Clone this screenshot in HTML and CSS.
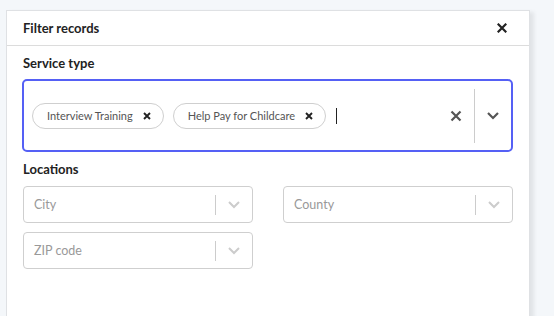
FILE: index.html
```html
<!DOCTYPE html>
<html>
<head>
<meta charset="utf-8">
<link rel="stylesheet" href="styles.css">
</head>
<body>
<div class="card">
  <div class="card-header">
    <span class="title">Filter records</span>
    <button class="close" aria-label="Close">
      <svg width="10" height="10" viewBox="0 0 10 10"><path d="M1.5 1.5 L8.5 8.5 M8.5 1.5 L1.5 8.5" stroke="#222" stroke-width="2.2" stroke-linecap="square"/></svg>
    </button>
  </div>
  <div class="card-body">
    <div class="label">Service type</div>
    <div class="multi">
      <div class="values">
        <span class="chip">Interview Training
          <svg class="chip-x" width="8" height="8" viewBox="0 0 8 8"><path d="M1 1 L7 7 M7 1 L1 7" stroke="#222" stroke-width="1.9"/></svg>
        </span>
        <span class="chip">Help Pay for Childcare
          <svg class="chip-x" width="8" height="8" viewBox="0 0 8 8"><path d="M1 1 L7 7 M7 1 L1 7" stroke="#222" stroke-width="1.9"/></svg>
        </span>
        <span class="caret"></span>
      </div>
      <div class="indicators">
        <span class="clear">
          <svg width="12" height="12" viewBox="0 0 12 12"><path d="M1.5 1.5 L10.5 10.5 M10.5 1.5 L1.5 10.5" stroke="#555" stroke-width="2.2"/></svg>
        </span>
        <span class="sep tall"></span>
        <span class="chev">
          <svg width="14" height="9" viewBox="0 0 14 9"><path d="M2 2 L7 7 L12 2" fill="none" stroke="#555" stroke-width="2.2"/></svg>
        </span>
      </div>
    </div>
    <div class="label loc">Locations</div>
    <div class="grid">
      <div class="select"><span class="ph">City</span><span class="sep"></span><span class="chev small"><svg width="14" height="9" viewBox="0 0 14 9"><path d="M2 2 L7 7 L12 2" fill="none" stroke="#ccc" stroke-width="2"/></svg></span></div>
      <div class="select"><span class="ph">County</span><span class="sep"></span><span class="chev small"><svg width="14" height="9" viewBox="0 0 14 9"><path d="M2 2 L7 7 L12 2" fill="none" stroke="#ccc" stroke-width="2"/></svg></span></div>
      <div class="select"><span class="ph">ZIP code</span><span class="sep"></span><span class="chev small"><svg width="14" height="9" viewBox="0 0 14 9"><path d="M2 2 L7 7 L12 2" fill="none" stroke="#ccc" stroke-width="2"/></svg></span></div>
    </div>
  </div>
</div>
</body>
</html>
```

FILE: styles.css
```css
html, body {
  margin: 0;
  padding: 0;
  background: #f4f7fa;
  font-family: Lato, "Noto Sans", sans-serif;
  height: 316px;
  overflow: hidden;
}
body {
  padding: 10px 0 0 6px;
  box-sizing: border-box;
}
.card {
  width: 524px;
  height: 320px;
  box-sizing: border-box;
  background: #fff;
  border: 1px solid #dfe1e4;
  box-shadow: 4px 2px 4px rgba(0,0,0,0.08);
}
.card-header {
  height: 35px;
  box-sizing: border-box;
  border-bottom: 1px solid #dcdcdc;
  display: flex;
  align-items: center;
  justify-content: space-between;
  padding: 0 22px 0 16px;
}
.title {
  font-size: 13px;
  font-weight: 700;
  color: #222;
}
.close {
  border: 0;
  background: none;
  padding: 0;
  display: flex;
}
.card-body {
  padding: 9px 16px 0 15px;
}
.label {
  font-size: 13px;
  font-weight: 700;
  color: #222;
  height: 16px;
  line-height: 16px;
  margin-left: 1px;
}
.multi {
  margin-top: 8px;
  height: 73px;
  box-sizing: border-box;
  border: 2px solid #5560f5;
  border-radius: 5px;
  display: flex;
  align-items: center;
}
.values {
  flex: 1;
  display: flex;
  align-items: center;
  padding-left: 8px;
  gap: 9px;
}
.chip {
  height: 26px;
  box-sizing: border-box;
  border: 1px solid #cfcfcf;
  border-radius: 13px;
  display: inline-flex;
  align-items: center;
  padding: 0 12px 0 14px;
  font-size: 11px;
  color: #555;
  gap: 10px;
}
.caret {
  width: 1px;
  height: 16px;
  background: #222;
  margin-left: 1px;
}
.indicators {
  display: flex;
  align-items: center;
  height: 100%;
}
.clear {
  display: flex;
  padding: 0 12px;
}
.sep {
  width: 1px;
  background: #ccc;
  height: 20px;
}
.sep.tall {
  height: 54px;
}
.chev {
  display: flex;
  padding: 0 11px 0 11px;
}
.loc {
  margin-top: 9px;
}
.grid {
  margin-top: 9px;
  display: grid;
  grid-template-columns: 230px 230px;
  column-gap: 30px;
  row-gap: 9px;
  margin-left: 1px;
}
.select {
  height: 37px;
  box-sizing: border-box;
  border: 1px solid #cfcfcf;
  border-radius: 4px;
  display: flex;
  align-items: center;
  padding-left: 10px;
}
.ph {
  flex: 1;
  font-size: 12.5px;
  color: #999;
}
.chev.small {
  padding: 0 11px 0 11px;
}
```
